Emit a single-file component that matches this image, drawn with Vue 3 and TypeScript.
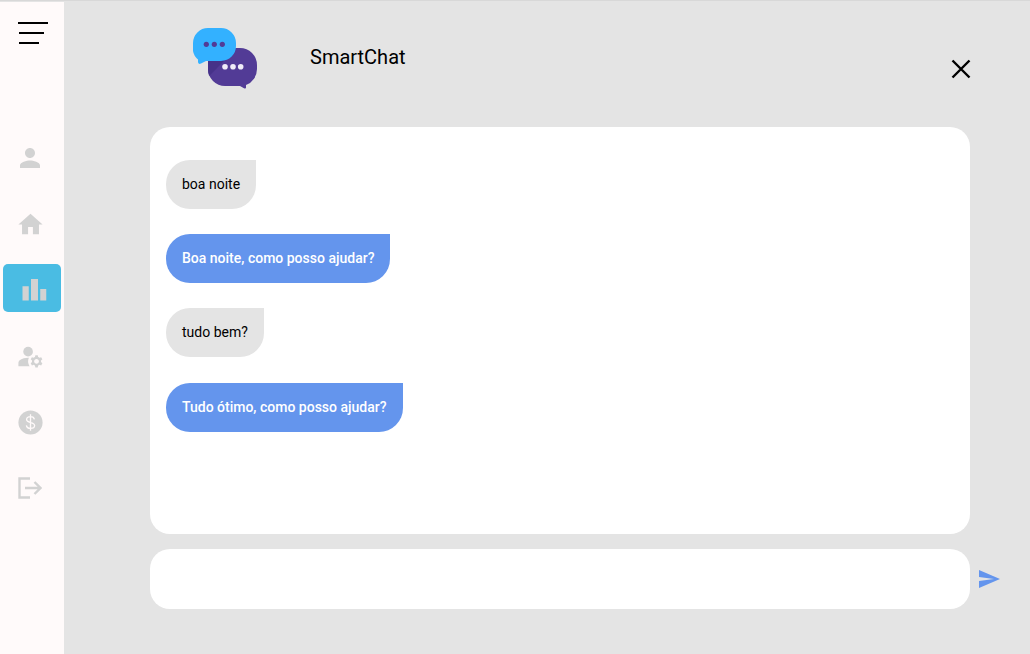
<template>
  <div class="page">
    <aside class="sidebar">
      <button class="menu-btn" aria-label="Menu">
        <span class="line line-1"></span>
        <span class="line line-2"></span>
        <span class="line line-3"></span>
      </button>

      <nav class="nav">
        <a
          v-for="item in navItems"
          :key="item.id"
          :class="['nav-item', { 'nav-item-active': item.id === activeItem }]"
        >
          <svg :width="item.size" :height="item.size" viewBox="0 0 24 24" fill="#d2d2d2">
            <path v-for="d in item.paths" :key="d" :d="d" />
            <path v-if="item.detail" :d="item.detail" fill="none" stroke="#fffafa" stroke-width="1.1" />
          </svg>
        </a>
        <a class="nav-item">
          <svg width="24" height="22" viewBox="0 0 24 22" fill="none" stroke="#d2d2d2" stroke-width="2.4">
            <path d="M12 1.500H1.500v19H12" />
            <path d="M7 11h15M16.500 5l6 6-6 6" />
          </svg>
        </a>
      </nav>
    </aside>

    <main class="main">
      <header class="header">
        <svg class="logo" width="66" height="62" viewBox="0 0 66 62">
          <path d="M32 20h15a17 17 0 0 1 17 17v4a17 17 0 0 1-11 16v2.500q0 1.500-2 .8l-4-2.300H32a17 17 0 0 1-17-17v-4a17 17 0 0 1 17-17z" fill="#523b96" />
          <path d="M15 30v11q0 4 1.200 7L31 33z" fill="#463289" />
          <path d="M15 0h13a15 15 0 0 1 15 15v3a15 15 0 0 1-15 15H13l-5 2.600q-3 1-3-1.500v-2.600A15 15 0 0 1 0 18v-3A15 15 0 0 1 15 0z" fill="#33b1ff" />
          <circle cx="13.300" cy="16.300" r="2.600" fill="#523b96" />
          <circle cx="21.300" cy="16.300" r="2.600" fill="#523b96" />
          <circle cx="29.300" cy="16.300" r="2.600" fill="#523b96" />
          <circle cx="32" cy="38.700" r="2.800" fill="#f0ecf8" />
          <circle cx="40" cy="38.700" r="2.800" fill="#f0ecf8" />
          <circle cx="47.700" cy="38.700" r="2.800" fill="#f0ecf8" />
        </svg>
        <h1 class="title">SmartChat</h1>
        <button class="close-btn" aria-label="Fechar">
          <svg width="20" height="20" viewBox="0 0 20 20" fill="none" stroke="#000" stroke-width="2.400">
            <path d="M1.500 1.500l17 17M18.500 1.500l-17 17" />
          </svg>
        </button>
      </header>

      <section class="chat">
        <div
          v-for="msg in messages"
          :key="msg.text"
          :class="['bubble', msg.bot ? 'bubble-bot' : 'bubble-user']"
        >
          {{ msg.text }}
        </div>
      </section>

      <div class="composer">
        <input class="input" type="text" />
        <button class="send-btn" aria-label="Enviar">
          <svg width="24" height="24" viewBox="0 0 24 24" fill="#6495ed">
            <path d="M2.010 21 23 12 2.010 3 2 10l15 2-15 2z" />
          </svg>
        </button>
      </div>
    </main>
  </div>
</template>

<script setup lang="ts">
import { ref } from 'vue'

interface NavItem {
  id: string
  size: number
  paths: string[]
  detail?: string
}

// Navigation items
const navItems: NavItem[] = [
  {
    id: 'profile',
    size: 30,
    paths: ['M12 12c2.210 0 4-1.790 4-4s-1.790-4-4-4-4 1.790-4 4 1.790 4 4 4zm0 2c-2.670 0-8 1.340-8 4v2h16v-2c0-2.660-5.330-4-8-4z'],
  },
  {
    id: 'home',
    size: 29,
    paths: ['M10 20v-6h4v6h5v-8h3L12 3 2 12h3v8z'],
  },
  {
    id: 'charts',
    size: 30,
    paths: ['M2 10.500h5V22H2zM8.800 4.800h5.600V22H8.800zM16.200 12.800H21V22h-4.800z'],
  },
  {
    id: 'accounts',
    size: 29,
    paths: [
      'M10.670 13.020C10.450 13.010 10.230 13 10 13c-2.420 0-4.680.670-6.610 1.820-.880.520-1.390 1.500-1.390 2.530V20h9.260c-.790-1.130-1.260-2.510-1.260-4 0-1.070.250-2.070.670-2.980z',
      'M10 12a4 4 0 1 0 0-8 4 4 0 0 0 0 8z',
      'M20.750 16c0-.220-.030-.420-.060-.630l1.140-1.010-1-1.730-1.450.490c-.320-.270-.680-.480-1.080-.630L18 11h-2l-.300 1.490c-.400.150-.760.360-1.080.630l-1.450-.490-1 1.730 1.140 1.010c-.030.210-.060.410-.060.630s.030.420.060.630l-1.140 1.010 1 1.730 1.450-.490c.320.270.680.480 1.080.630L16 21h2l.300-1.490c.400-.150.760-.360 1.080-.630l1.450.490 1-1.730-1.140-1.010c.030-.210.060-.410.060-.630zM17 18c-1.100 0-2-.900-2-2s.900-2 2-2 2 .900 2 2-.900 2-2 2z',
    ],
  },
  {
    id: 'billing',
    size: 29,
    paths: ['M12 2a10 10 0 1 0 0 20 10 10 0 0 0 0-20z'],
    detail: 'M15.200 9.400c-.200-1.400-1.500-2.300-3.200-2.300-1.900 0-3.200 1-3.200 2.500 0 3.400 6.600 1.500 6.600 4.900 0 1.500-1.400 2.400-3.400 2.400-1.800 0-3.200-.900-3.400-2.500M12 5.200v13.600',
  },
]

const activeItem = ref('charts')

// Conversation
const messages = [
  { text: 'boa noite', bot: false },
  { text: 'Boa noite, como posso ajudar?', bot: true },
  { text: 'tudo bem?', bot: false },
  { text: 'Tudo ótimo, como posso ajudar?', bot: true },
]
</script>

<style>
html,
body {
  margin: 0;
  background: #e4e4e4;
}
</style>

<style scoped>
.page {
  display: flex;
  height: 654px;
  overflow: hidden;
  border-top: 1px solid #d8d8d8;
  box-sizing: border-box;
  font-family: Roboto, "Liberation Sans", sans-serif;
  background: #e4e4e4;
}

.sidebar {
  width: 64px;
  flex-shrink: 0;
  margin-top: 1px;
  background: #fffafa;
}

.menu-btn {
  display: flex;
  flex-direction: column;
  align-items: flex-end;
  gap: 8px;
  width: 30px;
  margin: 20px 0 0 18px;
  padding: 0;
  border: 0;
  background: none;
}

.line {
  display: block;
  height: 2px;
  background: #000;
}

.line-1 {
  width: 30px;
}

.line-2 {
  width: 25px;
  margin-right: 4px;
}

.line-3 {
  width: 20px;
  margin-right: 9px;
}

.nav {
  display: flex;
  flex-direction: column;
  gap: 18px;
  margin-top: 90px;
  padding: 0 3px;
}

.nav-item {
  display: flex;
  align-items: center;
  justify-content: center;
  height: 48px;
  padding-right: 4px;
  border-radius: 5px;
}

.nav-item-active {
  margin: -2px 0 2px;
  padding: 0 0 0 5px;
  background: #4abce3;
}

.main {
  flex: 1;
  display: flex;
  flex-direction: column;
  min-width: 0;
}

.header {
  display: flex;
  align-items: flex-start;
  height: 126px;
  flex-shrink: 0;
}

.logo {
  margin: 27px 0 0 129px;
}

.title {
  margin: 44px 0 0 51px;
  font-size: 20px;
  font-weight: 400;
  line-height: 24px;
  color: #000;
}

.close-btn {
  display: flex;
  margin: 58px 0 0 545px;
  padding: 0;
  border: 0;
  background: none;
}

.chat {
  display: flex;
  flex-direction: column;
  align-items: flex-start;
  gap: 25.2px;
  width: 820px;
  height: 407px;
  margin-left: 86px;
  padding: 33px 16px 0;
  box-sizing: border-box;
  background: #fff;
  border-radius: 20px;
}

.bubble {
  padding: 16px;
  font-size: 14px;
  line-height: 17px;
  border-radius: 24px 0 24px 24px;
}

.bubble-user {
  background: #e4e4e4;
  color: #000;
}

.bubble-bot {
  background: #6495ed;
  color: #fff;
  font-weight: 500;
}

.composer {
  display: flex;
  align-items: center;
  gap: 7px;
  margin: 15px 0 0 86px;
}

.input {
  width: 820px;
  height: 60px;
  padding: 0 16px;
  box-sizing: border-box;
  border: 0;
  outline: 0;
  background: #fff;
  border-radius: 20px;
}

.send-btn {
  display: flex;
  padding: 0;
  border: 0;
  background: none;
}
</style>
